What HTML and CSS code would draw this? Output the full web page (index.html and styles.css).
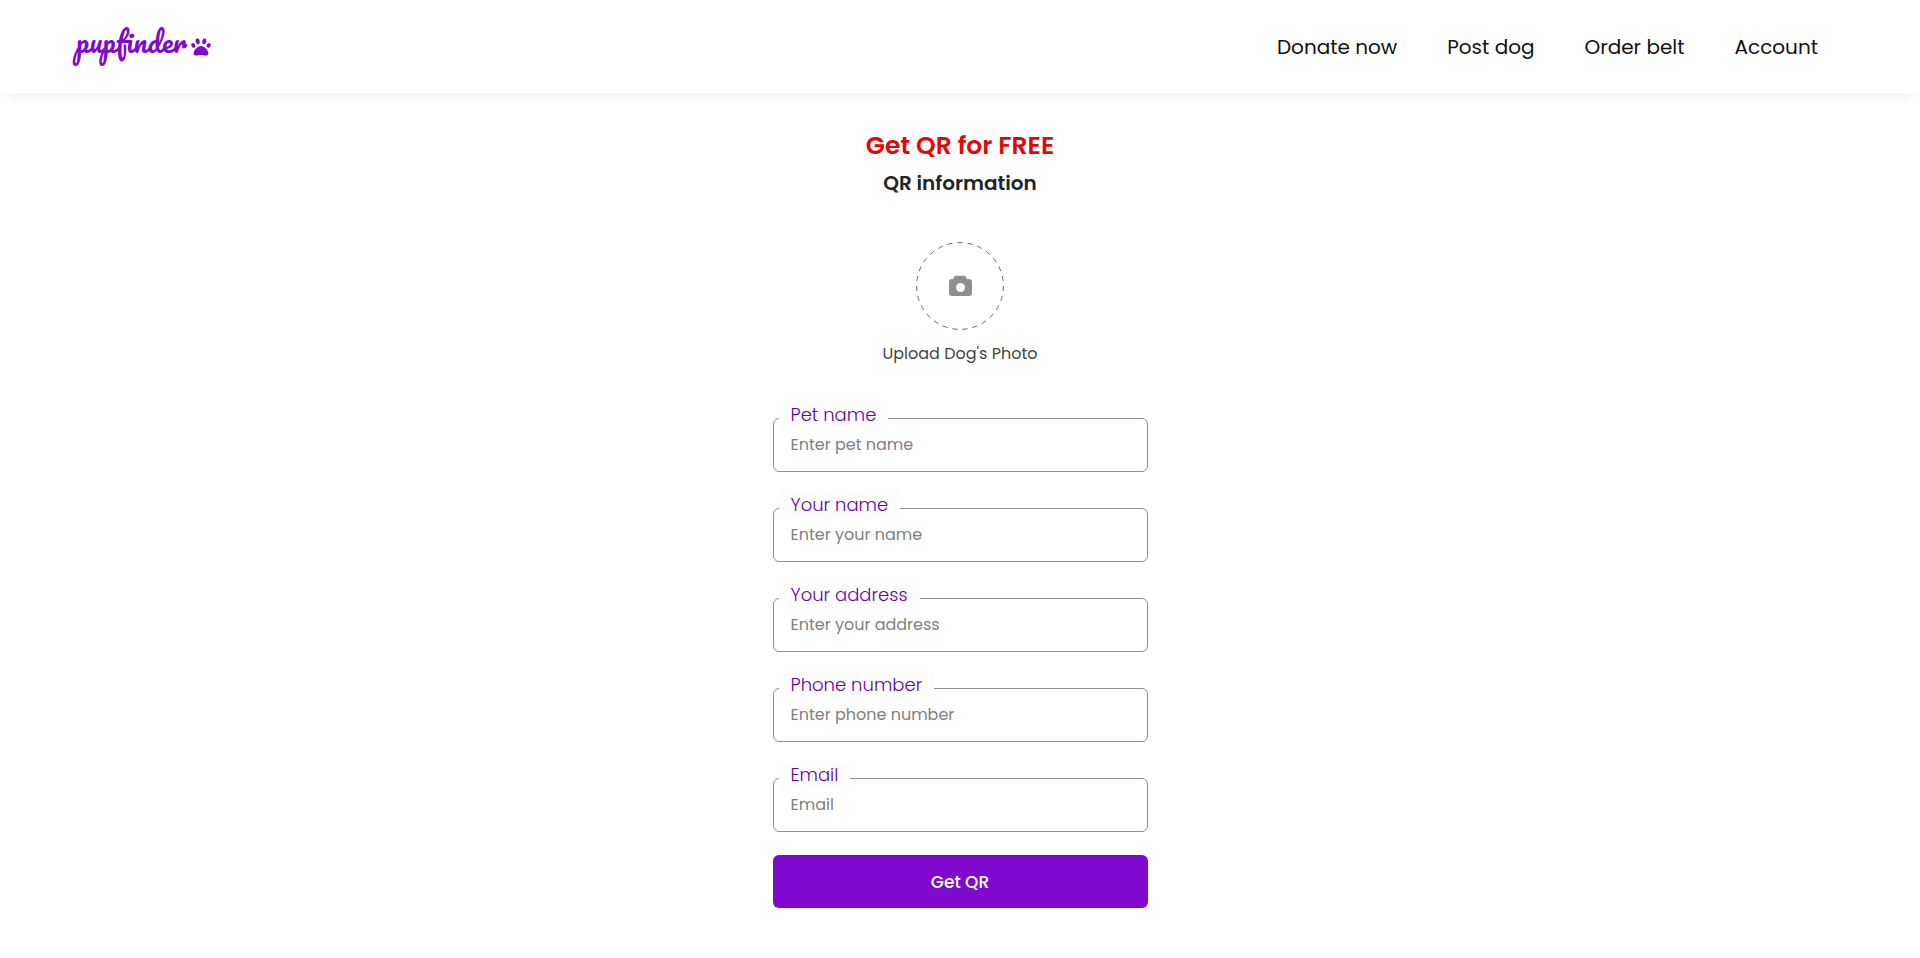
FILE: index.html
```html
<!DOCTYPE html>
<html lang="en">
<head>
    <meta charset="UTF-8">
    <meta name="viewport" content="width=device-width, initial-scale=1.0">
    <title>pupfinder</title>
    <link rel="stylesheet" href="styles.css">
</head>
<body>
    <header class="header">
        <a class="logo" href="#">
            <span class="logo-text">pupfinder</span>
            <svg class="paw" viewBox="0 0 20 18" aria-hidden="true">
                <ellipse cx="2.3" cy="7.4" rx="1.9" ry="2.3" transform="rotate(-25 2.3 7.4)"/>
                <ellipse cx="6.7" cy="3.3" rx="2" ry="2.9" transform="rotate(-12 6.7 3.3)"/>
                <ellipse cx="13.3" cy="3.3" rx="2" ry="2.9" transform="rotate(12 13.3 3.3)"/>
                <ellipse cx="17.7" cy="7.4" rx="1.9" ry="2.3" transform="rotate(25 17.7 7.4)"/>
                <path d="M10 8c3.4 0 7.4 4.4 7.4 7.2 0 1.5-1 2.3-2.5 2.300-1.800 0-3-.5-4.900-.5s-3.100.5-4.900.5c-1.500 0-2.500-.8-2.500-2.300C2.600 12.400 6.600 8 10 8z"/>
            </svg>
        </a>
        <nav class="nav">
            <a href="#">Donate now</a>
            <a href="#">Post dog</a>
            <a href="#">Order belt</a>
            <a href="#">Account</a>
        </nav>
    </header>

    <main class="container">
        <h1>Get QR for FREE</h1>
        <h2>QR information</h2>

        <form class="form">
            <button type="button" class="upload">
                <svg class="upload-circle" viewBox="0 0 88 88" aria-hidden="true">
                    <circle class="ring" cx="44" cy="44" r="43.4" pathLength="270"/>
                    <path class="camera" d="M37 37l1.500-2.500q.5-.8 1.500-.8h8q1 0 1.500.8L51 37h2a3 3 0 0 1 3 3v11a3 3 0 0 1-3 3H36a3 3 0 0 1-3-3V40a3 3 0 0 1 3-3zM44.500 41a4.500 4.500 0 1 0 0 9 4.500 4.500 0 0 0 0-9z"/>
                </svg>
                <span>Upload Dog's Photo</span>
            </button>

            <div class="field">
                <label for="petName">Pet name</label>
                <input type="text" id="petName" placeholder="Enter pet name">
            </div>
            <div class="field">
                <label for="yourName">Your name</label>
                <input type="text" id="yourName" placeholder="Enter your name">
            </div>
            <div class="field">
                <label for="address">Your address</label>
                <input type="text" id="address" placeholder="Enter your address">
            </div>
            <div class="field">
                <label for="phone">Phone number</label>
                <input type="tel" id="phone" placeholder="Enter phone number">
            </div>
            <div class="field">
                <label for="email">Email</label>
                <input type="email" id="email" placeholder="Email">
            </div>
            <button type="submit" class="submit">Get QR</button>
        </form>
    </main>
</body>
</html>
```

FILE: styles.css
```css
* {
    box-sizing: border-box;
}
body {
    margin: 0;
    font-family: Poppins, Inter, sans-serif;
    background: #fff;
    color: #212529;
}
a {
    text-decoration: none;
}
.header {
    display: flex;
    justify-content: space-between;
    align-items: center;
    height: 93px;
    padding: 0 102px 0 76px;
    background: #fff;
    box-shadow: 0 8px 12px -6px rgba(0, 0, 0, 0.08);
}
.logo {
    display: flex;
    align-items: center;
    gap: 4px;
    color: #7f09ce;
}
.logo-text {
    padding-bottom: 10px;
    font-family: Pacifico, Lato, cursive;
    font-size: 28px;
    line-height: 32px;
}
.paw {
    width: 20px;
    height: 18px;
    fill: #7f09ce;
}
.nav {
    display: flex;
    gap: 50px;
}
.nav a {
    color: #111;
    font-size: 20px;
    line-height: 30px;
}
.container {
    padding: 36px 16px;
    text-align: center;
}
h1, h2 {
    margin: 0;
    font-weight: 600;
}
h1 {
    color: #dc0a0a;
    font-size: 25px;
    line-height: 34px;
}
h2 {
    margin-top: 6px;
    font-size: 20px;
    line-height: 28px;
}
.form {
    max-width: 375px;
    margin: 45px auto 0;
}
.upload {
    display: flex;
    flex-direction: column;
    align-items: center;
    gap: 12px;
    margin: 0 auto 52px;
    padding: 0;
    border: none;
    background: none;
    color: #444;
    font-family: inherit;
    font-size: 16px;
    line-height: 24px;
    cursor: pointer;
}
.upload-circle {
    width: 88px;
    height: 88px;
}
.ring {
    fill: none;
    stroke: #666;
    stroke-dasharray: 5 5;
}
.camera {
    fill: #8f8f8f;
    fill-rule: evenodd;
}
.field {
    position: relative;
    margin-bottom: 36px;
}
.field label {
    position: absolute;
    top: -17px;
    left: 6px;
    padding: 0 12px 0 12px;
    background: #fdfdfd;
    color: #5f05a8;
    font-size: 18px;
    font-weight: 300;
    line-height: 27px;
}
.field input {
    display: block;
    width: 100%;
    height: 54px;
    padding: 0 17px 2px;
    border: 1px solid #8f8f8f;
    border-radius: 6px;
    background: #fff;
    font-family: inherit;
    font-size: 16px;
}
.field input::placeholder {
    color: #808080;
}
.submit {
    width: 100%;
    height: 53px;
    margin-top: -13px;
    border: none;
    border-radius: 6px;
    background: #7f09ce;
    color: #fff;
    font-family: inherit;
    font-size: 17px;
    font-weight: 500;
    cursor: pointer;
}
```
